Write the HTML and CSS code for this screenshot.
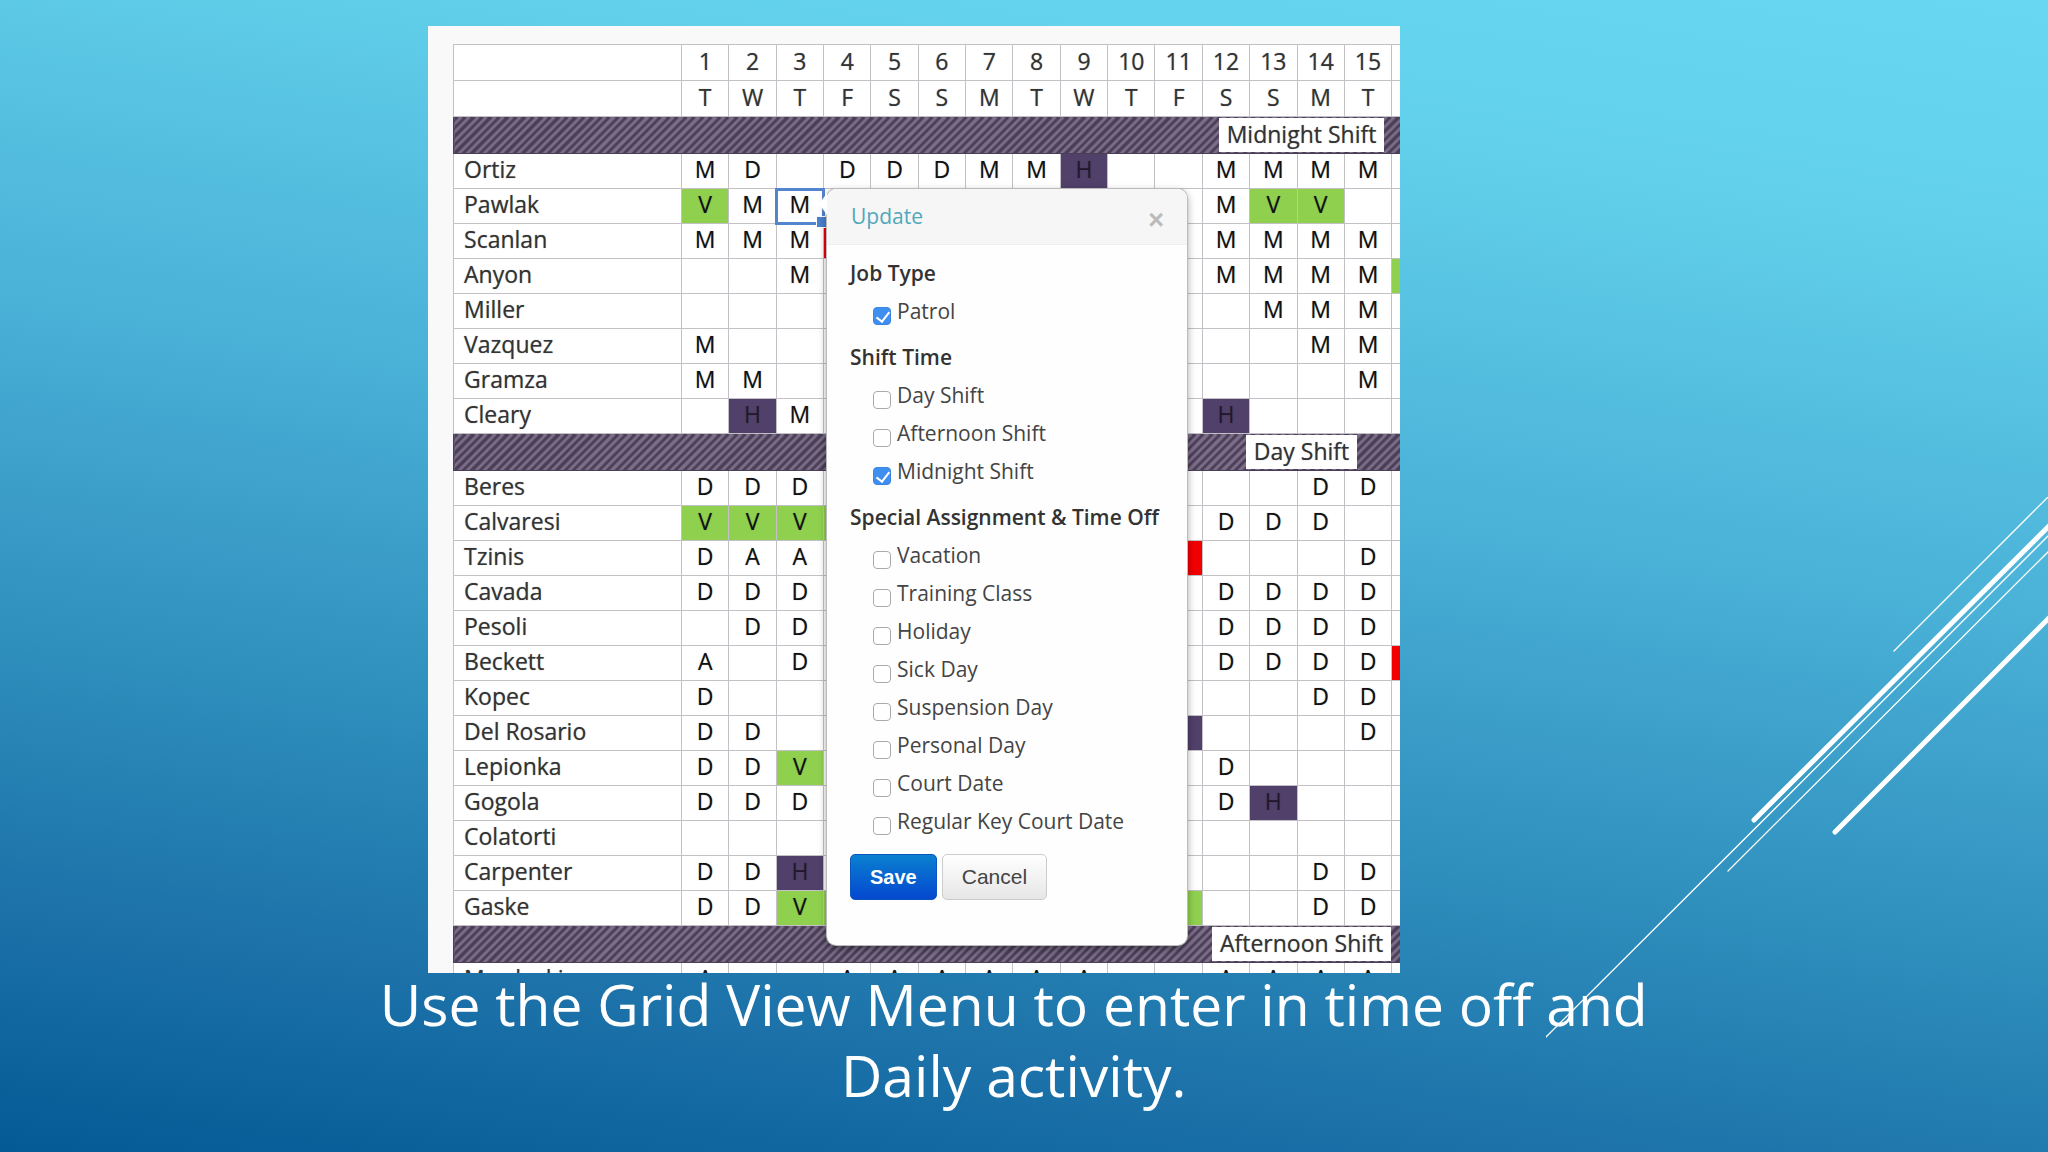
FILE: index.html
```html
<!DOCTYPE html>
<html lang="en">
<head>
<meta charset="utf-8">
<title>Grid View Menu</title>
<link rel="stylesheet" href="styles.css">
</head>
<body>
<main class="slide">
  <svg class="streaks" viewBox="0 0 502 541" aria-hidden="true">
    <g fill="none" stroke="#fff" stroke-linecap="round">
      <path stroke-width="1.3" d="M348 154L505 -3M0 540L505 36M182 374L505 52"/>
      <path stroke-width="5" d="M208 323L505 27M289 335L505 119"/>
    </g>
  </svg>
  <section class="board">
    <table class="roster">
      <colgroup><col class="col-name"><col span="31"></colgroup>
      <thead id="days"></thead>
      <tbody id="rows"></tbody>
    </table>
    <form class="popover">
      <header class="popover-head">
        <h2 class="popover-title">Update</h2>
        <button class="close" type="button" aria-label="Close">×</button>
      </header>
      <div class="popover-body">
        <fieldset class="group">
          <legend>Job Type</legend>
          <label class="option"><input type="checkbox" checked>Patrol</label>
        </fieldset>
        <fieldset class="group">
          <legend>Shift Time</legend>
          <label class="option"><input type="checkbox">Day Shift</label>
          <label class="option"><input type="checkbox">Afternoon Shift</label>
          <label class="option"><input type="checkbox" checked>Midnight Shift</label>
        </fieldset>
        <fieldset class="group">
          <legend>Special Assignment &amp; Time Off</legend>
          <label class="option"><input type="checkbox">Vacation</label>
          <label class="option"><input type="checkbox">Training Class</label>
          <label class="option"><input type="checkbox">Holiday</label>
          <label class="option"><input type="checkbox">Sick Day</label>
          <label class="option"><input type="checkbox">Suspension Day</label>
          <label class="option"><input type="checkbox">Personal Day</label>
          <label class="option"><input type="checkbox">Court Date</label>
          <label class="option"><input type="checkbox">Regular Key Court Date</label>
        </fieldset>
        <div class="actions">
          <button class="btn btn-primary" type="button">Save</button>
          <button class="btn" type="button">Cancel</button>
        </div>
      </div>
    </form>
  </section>
  <p class="caption">Use the Grid View Menu to enter in time off and Daily activity.</p>
</main>
<script src="roster.js"></script>
</body>
</html>
```
FILE: styles.css
```css
* { box-sizing: border-box; }

body {
  margin: 0;
  font-family: "Open Sans", "Noto Sans", sans-serif;
  color: #333;
}

.slide {
  position: relative;
  min-height: 100vh;
  padding-top: 26px;
  overflow: hidden;
  background: linear-gradient(189deg, #68d8f2 0%, #62d0eb 16%, #4ab1d7 42%, #2f8fbd 65%, #1c72a9 83%, #045a94 100%);
}

.streaks {
  position: absolute;
  right: 0;
  bottom: 114px;
  width: 502px;
  height: 541px;
}

/* Schedule */
.board {
  position: relative;
  width: 972px;
  max-width: 100%;
  height: 947px;
  margin-left: 20.9%;
  padding: 18px 0 0 25px;
  overflow: hidden;
  background: #f9f9f9;
}

.roster {
  width: 1697px;
  table-layout: fixed;
  border-collapse: collapse;
  background: #fff;
  font-size: 23px;
  line-height: 28px;
  text-shadow: 0 0 1px #3338;
}

.col-name { width: 228px; }

.roster th,
.roster td {
  height: 35px;
  padding: 0 0 4px;
  border: 1px solid #c4c1c6;
  font-weight: 400;
  text-align: center;
}

.roster thead th { height: 36px; }

.roster tbody th {
  padding-left: 10px;
  text-align: left;
}

.roster tbody td { color: #111; }

.roster .vacation { background: #8fd14f; }
.roster .holiday { background: #51406a; color: #21182e; }
.roster .sick { background: #f20000; }

.roster .selected {
  position: relative;
  outline: 3px solid #5584cf;
  outline-offset: -2px;
}

.roster .selected::after {
  content: "";
  position: absolute;
  right: -5px;
  bottom: -5px;
  width: 10px;
  height: 10px;
  border: 1px solid #fff;
  background: #4a80d0;
}

.roster .band th {
  height: 37px;
  padding: 0;
  border-color: #4a3f57;
  background: repeating-linear-gradient(135deg, #4a3f57 0 3px, #7c6d88 3px 6px);
  text-align: center;
}

.band-label {
  display: inline-block;
  padding: 2px 8px 4px;
  background: #fff;
  vertical-align: middle;
}

/* Update popover */
.popover {
  position: absolute;
  left: 399px;
  top: 163px;
  width: 360px;
  height: 756px;
  border-radius: 9px;
  background: #fefefe;
  box-shadow: 0 0 0 1px #bbb, 0 3px 8px #0006;
}

.popover::before {
  content: "";
  position: absolute;
  left: -8px;
  top: 4px;
  width: 8px;
  height: 22px;
  background: #fff;
  clip-path: polygon(100% 0, 0 50%, 100% 100%);
}

.popover-head {
  display: flex;
  justify-content: space-between;
  height: 56px;
  padding: 11px 23px 0 24px;
  border-radius: 9px 9px 0 0;
  border-bottom: 1px solid #eee;
  background: #f6f6f6;
}

.popover-title {
  margin: 0;
  color: #52a7bd;
  font-size: 21px;
  font-weight: 400;
  line-height: 32px;
}

.close {
  height: 36px;
  margin: 0;
  padding: 4px 0 0;
  border: 0;
  background: none;
  color: #bbb;
  font: bold 27px/32px "Liberation Sans", Arial, sans-serif;
}

.popover-body { padding: 9px 16px 0 23px; }

.group {
  margin: 0;
  padding: 0 0 8px;
  border: 0;
}

.group legend {
  padding: 0;
  font-size: 21px;
  font-weight: 600;
  line-height: 38px;
  white-space: nowrap;
}

.option {
  display: flex;
  align-items: center;
  gap: 6px;
  height: 38px;
  padding-left: 23px;
  color: #444;
  font-size: 21px;
}

.option input {
  appearance: none;
  width: 18px;
  height: 18px;
  margin: 10px 0 0;
  border: 1px solid #aaa;
  border-radius: 4px;
  background: #fff;
}

.option input:checked {
  border-color: #3b86e4;
  background: #3f8ff0;
}

.option input:checked::after {
  content: "";
  display: block;
  width: 6px;
  height: 11px;
  margin: 1px 0 0 5px;
  border: solid #fff;
  border-width: 0 2px 2px 0;
  transform: rotate(38deg);
}

.actions {
  display: flex;
  gap: 5px;
  margin-top: 6px;
}

.btn {
  height: 46px;
  padding: 0 19px;
  border: 1px solid #ccc;
  border-radius: 5px;
  background: linear-gradient(#fff, #e6e6e6);
  color: #444;
  font: 21px "Liberation Sans", Arial, sans-serif;
}

.btn-primary {
  border-color: #0a55c0;
  background: linear-gradient(#0a80d0, #0448d0);
  color: #fff;
  font-size: 20px;
  font-weight: 700;
}

.caption {
  position: relative;
  width: 65%;
  margin: -4px 0 0 17%;
  color: #fff;
  font-size: 57px;
  line-height: 71px;
  text-align: center;
}
```
FILE: roster.js
```js
// One character per day; "." is an empty day, "r" a sick day,
// "h" and "v" are holiday and vacation cells without a letter.
const shifts = [
  ["Midnight Shift", [
    ["Ortiz", "MD.DDDMMH..MMMM."],
    ["Pawlak", "VMM........MVV.."],
    ["Scanlan", "MMMr.......MMMM."],
    ["Anyon", "..M........MMMMv"],
    ["Miller", "............MMM."],
    ["Vazquez", "M............MM."],
    ["Gramza", "MM............M."],
    ["Cleary", ".HM........H...."]
  ]],
  ["Day Shift", [
    ["Beres", "DDD..........DD."],
    ["Calvaresi", "VVVv.......DDD.."],
    ["Tzinis", "DAA.......r...D."],
    ["Cavada", "DDD........DDDD."],
    ["Pesoli", ".DD........DDDD."],
    ["Beckett", "A.D........DDDDr"],
    ["Kopec", "D............DD."],
    ["Del Rosario", "DD........h...D."],
    ["Lepionka", "DDV........D...."],
    ["Gogola", "DDD........DH..."],
    ["Colatorti", "................"],
    ["Carpenter", "DDH..........DD."],
    ["Gaske", "DDVv......v..DD."]
  ]],
  ["Afternoon Shift", [
    ["Mardoski", "A..AAAAAA..AAAA."]
  ]]
];
const kinds = { V: "vacation", v: "vacation", H: "holiday", h: "holiday", r: "sick" };

const line = (cells, tag) => cells.map(c => `<${tag}>${c}</${tag}>`).join("");
const dates = Array.from({ length: 15 }, (_, i) => i + 1);
document.getElementById("days").innerHTML =
  `<tr><th></th>${line([...dates, ""], "th")}</tr>` +
  `<tr><th></th>${line([..."TWTFSSMTWTFSSMT", ""], "th")}</tr>`;

const cell = (c, name, i) => {
  const classes = [kinds[c] || ""];
  if (name === "Pawlak" && i === 2) classes.push("selected");
  return `<td class="${classes.join(" ").trim()}">${/[A-Z]/.test(c) ? c : ""}</td>`;
};
document.getElementById("rows").innerHTML = shifts.map(([title, people]) =>
  `<tr class="band"><th colspan="32"><span class="band-label">${title}</span></th></tr>` +
  people.map(([name, days]) =>
    `<tr><th>${name}</th>${[...days].map((c, i) => cell(c, name, i)).join("")}</tr>`
  ).join("")
).join("");
```
